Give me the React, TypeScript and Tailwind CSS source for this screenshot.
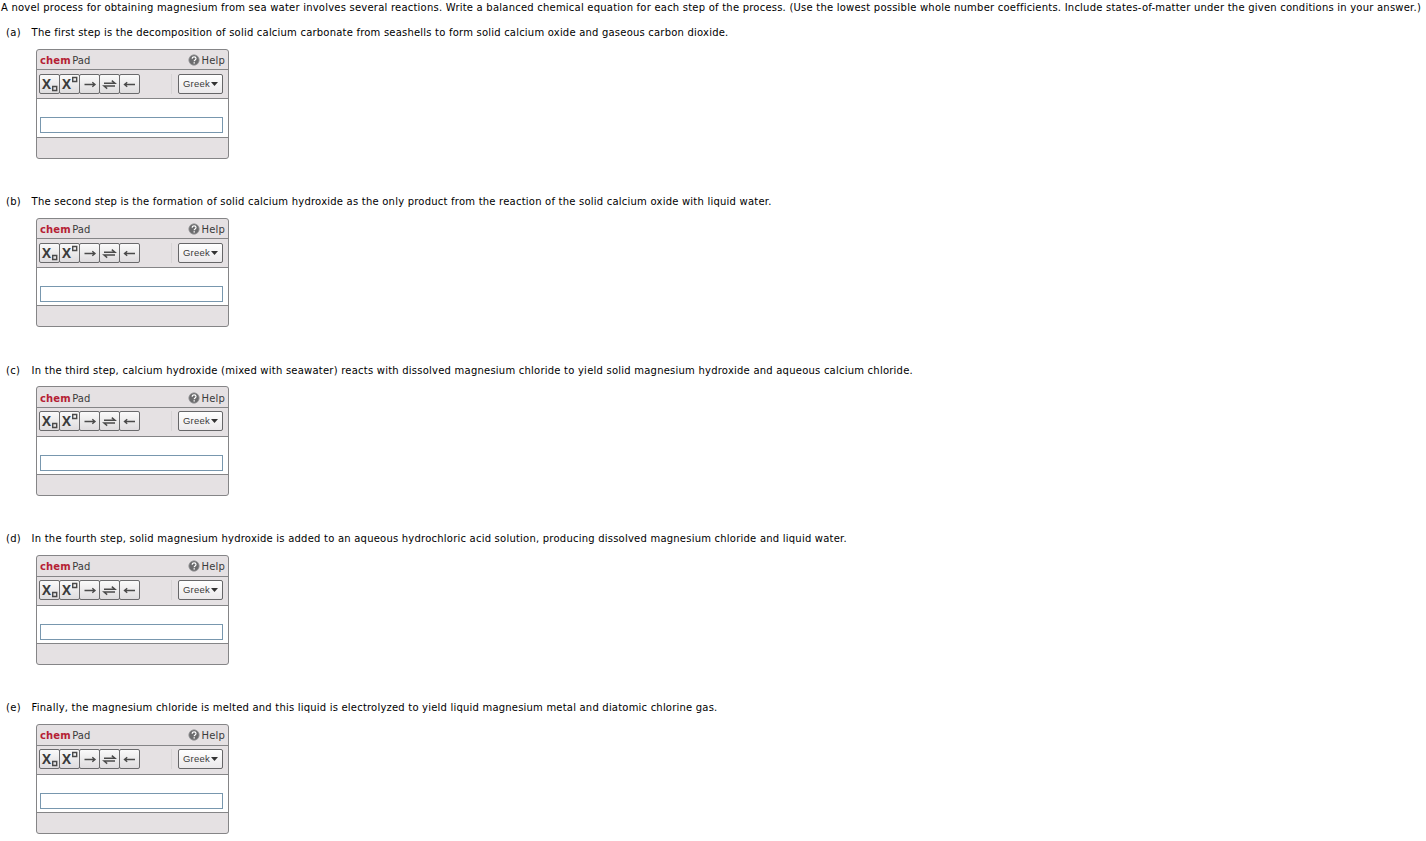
import type { ReactNode } from "react";

const steps = [
  {
    label: "(a)",
    text: "The first step is the decomposition of solid calcium carbonate from seashells to form solid calcium oxide and gaseous carbon dioxide.",
    row: "h-[169px]",
    tracking: "tracking-[0.207px]",
    gap: "h-2",
    header: "h-5 pt-[2px]",
    toolbar: "pt-1",
    answer: "h-[39px]"
  },
  {
    label: "(b)",
    text: "The second step is the formation of solid calcium hydroxide as the only product from the reaction of the solid calcium oxide with liquid water.",
    row: "h-[169px]",
    tracking: "tracking-[0.22px]",
    gap: "h-2",
    header: "h-5 pt-[2px]",
    toolbar: "pt-1",
    answer: "h-[38px]"
  },
  {
    label: "(c)",
    text: "In the third step, calcium hydroxide (mixed with seawater) reacts with dissolved magnesium chloride to yield solid magnesium hydroxide and aqueous calcium chloride.",
    row: "h-[168px]",
    tracking: "tracking-[0.225px]",
    gap: "h-[7px]",
    header: "h-[21px] pt-[3px]",
    toolbar: "pt-[3px]",
    answer: "h-[38px]"
  },
  {
    label: "(d)",
    text: "In the fourth step, solid magnesium hydroxide is added to an aqueous hydrochloric acid solution, producing dissolved magnesium chloride and liquid water.",
    row: "h-[169px]",
    tracking: "tracking-[0.221px]",
    gap: "h-2",
    header: "h-[21px] pt-[2px]",
    toolbar: "pt-[3px]",
    answer: "h-[38px]"
  },
  {
    label: "(e)",
    text: "Finally, the magnesium chloride is melted and this liquid is electrolyzed to yield liquid magnesium metal and diatomic chlorine gas.",
    row: "h-[134px]",
    tracking: "tracking-[0.203px]",
    gap: "h-2",
    header: "h-[21px] pt-[2px]",
    toolbar: "pt-[3px]",
    answer: "h-[38px]"
  }
];

type Step = (typeof steps)[number];

function ToolButton({ label, children }: { label: string; children: ReactNode }) {
  return (
    <button
      aria-label={label}
      className="-mr-px h-5 w-[21px] rounded-[2px] border border-[#6a6a6c] bg-linear-to-b from-[#fafafa] to-[#dedcde]"
    >
      <svg viewBox="0 0 19 18" className="h-[18px] w-[19px]" fill="none" stroke="#4a4a4a" strokeWidth="1.4">
        {children}
      </svg>
    </button>
  );
}

function BaseSymbol() {
  return (
    <text x="2" y="13.7" fill="#3b3b3b" stroke="none" className="font-['Open_Sans'] text-[13.5px] font-bold">
      X
    </text>
  );
}

function ChemPad({ step }: { step: Step }) {
  return (
    <div className="w-[193px] overflow-hidden rounded-[3px] border border-[#858587] bg-[#e5e1e3] text-[#3b3b3b]">
      <div className={`flex items-start justify-between border-b border-[#858587] px-[3px] ${step.header}`}>
        <div className="flex gap-[1.5px] pt-px tracking-[0.1px]">
          <span className="font-bold text-[#b51f35]">chem</span>
          <span>Pad</span>
        </div>
        <div className="flex items-start gap-[2px]">
          <svg viewBox="0 0 12 12" className="mt-[2px] size-3">
            <circle cx="6" cy="6" r="5.2" fill="#6c6c6e" stroke="#9c9c9e" strokeWidth="0.8" />
            <path d="M4.2 4.7c0-2.5 3.8-2.3 3.8-.2 0 1.4-1.8 1.4-1.8 2.7" fill="none" stroke="#fff" strokeWidth="1.2" />
            <path d="M5.5 8.2h1.4v1.3H5.5z" fill="#fff" />
          </svg>
          <span className="pt-px tracking-[0.15px]">Help</span>
        </div>
      </div>
      <div className={`flex h-[29px] items-start border-b border-[#858587] pl-[2px] pr-[5px] ${step.toolbar}`}>
        <ToolButton label="Subscript">
          <BaseSymbol />
          <path d="M12.7 11.5h4v4h-4z" />
        </ToolButton>
        <ToolButton label="Superscript">
          <BaseSymbol />
          <path d="M12.7 2.5h4v4h-4z" />
        </ToolButton>
        <ToolButton label="Right arrow">
          <path d="M4.5 9.5H15M12.3 7.2l2.7 2.3-2.7 2.3" />
        </ToolButton>
        <ToolButton label="Equilibrium">
          <path d="M4 8.2h11L11.8 5.6M15 11H4l3.2 2.6" />
        </ToolButton>
        <ToolButton label="Left arrow">
          <path d="M15 9.5H4.5M7.2 7.2L4.5 9.5l2.7 2.3" />
        </ToolButton>
        <div className="ml-auto mr-[6px] h-5 w-px bg-[#d7d4d5]" />
        <button className="flex h-5 w-[45px] items-center justify-center gap-px rounded-[2px] border border-[#666668] bg-linear-to-b from-white to-[#ebe9eb] font-['Liberation_Sans'] text-[9.5px] tracking-[0.25px]">
          Greek
          <svg viewBox="0 0 7 4" className="h-1 w-[7px]">
            <path d="M0 0h7L3.5 4z" fill="#333" />
          </svg>
        </button>
      </div>
      <div className={`border-b border-[#858587] bg-white px-[3px] pt-[18px] ${step.answer}`}>
        <input aria-label="Answer" className="block h-4 w-[183px] border border-[#7897ae] bg-white" />
      </div>
      <div className="h-5" />
    </div>
  );
}

export default function App() {
  return (
    <main className="h-[841px] overflow-hidden bg-white font-['DejaVu_Sans',Verdana,sans-serif] text-[10px] leading-4 text-black">
      <p className="h-[25px] pl-px tracking-[0.22px] whitespace-nowrap">
        A novel process for obtaining magnesium from sea water involves several reactions. Write a balanced chemical
        equation for each step of the process. (Use the lowest possible whole number coefficients. Include
        states-of-matter under the given conditions in your answer.)
      </p>
      {steps.map((step) => (
        <section key={step.label} className={`flex pl-[6px] whitespace-nowrap ${step.row}`}>
          <div className="w-[25px] shrink-0 tracking-[0.3px]">{step.label}</div>
          <div>
            <p className={`pl-[0.6px] ${step.tracking}`}>{step.text}</p>
            <div className={step.gap} />
            <div className="pl-[5px]">
              <ChemPad step={step} />
            </div>
          </div>
        </section>
      ))}
    </main>
  );
}
